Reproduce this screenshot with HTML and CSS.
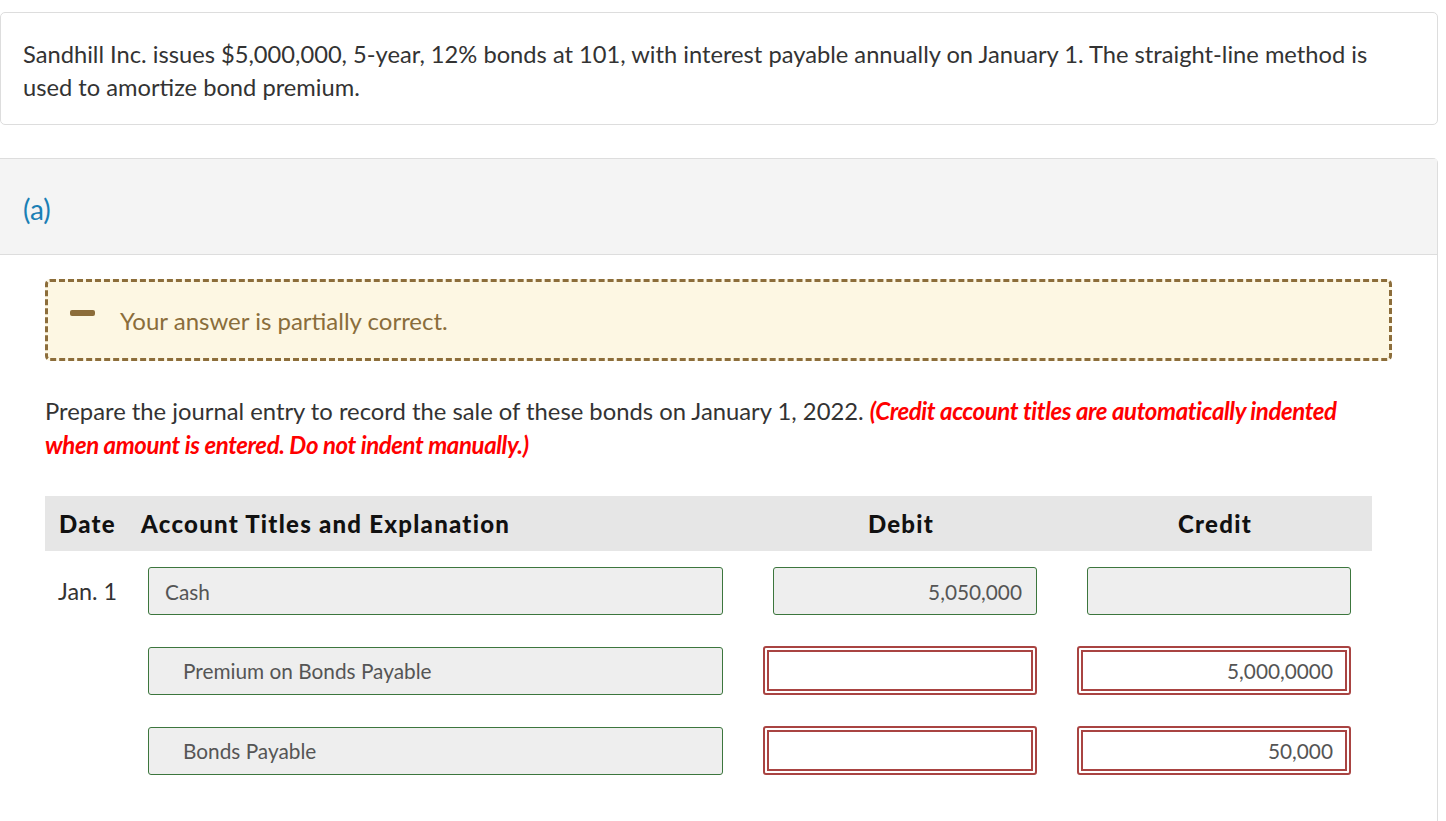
FILE: index.html
```html
<!DOCTYPE html>
<html lang="en">
<head>
    <meta charset="UTF-8">
    <meta name="viewport" content="width=device-width, initial-scale=1.0">
    <title>Bonds Question</title>
    <link rel="stylesheet" href="styles.css">
</head>
<body>
    <div class="page">
        <div class="question-card">
            <p>Sandhill Inc. issues $5,000,000, 5-year, 12% bonds at 101, with interest payable annually on January 1. The straight-line method is used to amortize bond premium.</p>
        </div>

        <div class="part-card">
            <div class="part-header">(a)</div>
            <div class="part-body">
                <div class="feedback">
                    <span class="feedback-icon"></span>
                    <span class="feedback-text">Your answer is partially correct.</span>
                </div>

                <p class="instructions">Prepare the journal entry to record the sale of these bonds on January 1, 2022. <em class="note">(Credit account titles are automatically indented when amount is entered. Do not indent manually.)</em></p>

                <div class="journal">
                    <div class="journal-head">
                        <div class="head-date">Date</div>
                        <div class="head-account">Account Titles and Explanation</div>
                        <div class="head-amount">Debit</div>
                        <div class="head-amount">Credit</div>
                    </div>

                    <div class="journal-row">
                        <div class="date">Jan. 1</div>
                        <input class="field" type="text" value="Cash" readonly>
                        <div class="amount-cell"><input class="field amount" type="text" value="5,050,000" readonly></div>
                        <div class="amount-cell"><input class="field amount" type="text" value="" readonly></div>
                    </div>

                    <div class="journal-row">
                        <div class="date"></div>
                        <input class="field indented" type="text" value="Premium on Bonds Payable" readonly>
                        <div class="amount-cell wrong"><input class="field amount" type="text" value="" readonly></div>
                        <div class="amount-cell wrong"><input class="field amount" type="text" value="5,000,0000" readonly></div>
                    </div>

                    <div class="journal-row">
                        <div class="date"></div>
                        <input class="field indented" type="text" value="Bonds Payable" readonly>
                        <div class="amount-cell wrong"><input class="field amount" type="text" value="" readonly></div>
                        <div class="amount-cell wrong"><input class="field amount" type="text" value="50,000" readonly></div>
                    </div>
                </div>
            </div>
        </div>
    </div>
</body>
</html>
```

FILE: styles.css
```css
body {
    margin: 0;
    background: #fff;
    font-family: Lato, "Open Sans", Arial, sans-serif;
    color: #333;
    overflow: hidden;
}

.page {
    width: 1438px;
    padding-top: 12px;
}

.question-card {
    border: 1px solid #ddd;
    border-radius: 5px;
    padding: 25px 22px 20px 22px;
}

.question-card p {
    margin: 0;
    font-size: 23.7px;
    line-height: 33px;
}

.part-card {
    margin-top: 33px;
    border: 1px solid #ddd;
    border-left: 0;
    border-radius: 0 5px 0 0;
    min-height: 700px;
}

.part-header {
    background: #f4f4f4;
    height: 96px;
    border-bottom: 1px solid #ddd;
    display: flex;
    align-items: center;
    padding-left: 23px;
    padding-top: 4px;
    box-sizing: border-box;
    font-size: 28px;
    color: #1a7fb5;
}

.part-body {
    padding: 24px 45px 40px 45px;
}

.feedback {
    display: flex;
    align-items: center;
    height: 82px;
    box-sizing: border-box;
    border: 3px dashed #8c6d3a;
    border-radius: 5px;
    background: #fdf7e3;
    padding-left: 22px;
}

.feedback-icon {
    width: 25px;
    height: 6px;
    border-radius: 2px;
    background: #8c6d3a;
    margin-right: 25px;
    margin-top: -14px;
}

.feedback-text {
    font-size: 24px;
    color: #8a6d3b;
}

.instructions {
    margin: 33px 0 0 0;
    font-size: 23.8px;
    line-height: 33px;
}

.note {
    color: #f00;
    font-weight: 700;
    font-size: 24px;
    letter-spacing: -0.4px;
}

.journal {
    margin-top: 34px;
    width: 1327px;
}

.journal-head {
    display: flex;
    align-items: center;
    height: 55px;
    background: #e6e6e6;
    font-size: 24px;
    font-weight: 900;
    letter-spacing: 1.25px;
    color: #111;
    padding-left: 14px;
    padding-right: 25px;
}

.head-date {
    width: 82px;
}

.head-account {
    flex: 1;
}

.head-amount {
    width: 264px;
    text-align: center;
}

.head-amount + .head-amount {
    margin-left: 50px;
}

.journal-row {
    display: grid;
    grid-template-columns: 63px 575px 274px 274px;
    column-gap: 40px;
    align-items: center;
    margin-top: 16px;
    margin-bottom: 31px;
}

.journal-row + .journal-row {
    margin-top: 0;
}

.date {
    padding-left: 13px;
    font-size: 23.4px;
    white-space: nowrap;
}

.field {
    box-sizing: border-box;
    height: 48px;
    width: 100%;
    margin: 0;
    border: 1px solid #3c763d;
    border-radius: 3px;
    background: #eee;
    font-family: inherit;
    font-size: 20.8px;
    color: #555;
    padding: 0 16px;
    outline: none;
}

.indented {
    padding-left: 34px;
}

.amount-cell {
    display: flex;
    justify-content: flex-end;
}

.amount-cell .field {
    width: 264px;
}

.amount {
    text-align: right;
    padding-right: 14px;
}

.wrong {
    box-sizing: border-box;
    height: 49px;
    border: 2px solid #a94442;
    border-radius: 3px;
    padding: 2px;
}

.wrong .field {
    width: 100%;
    height: 41px;
    border: 2px solid #a94442;
    border-radius: 0;
    background: #fff;
    padding-right: 12px;
}
```
